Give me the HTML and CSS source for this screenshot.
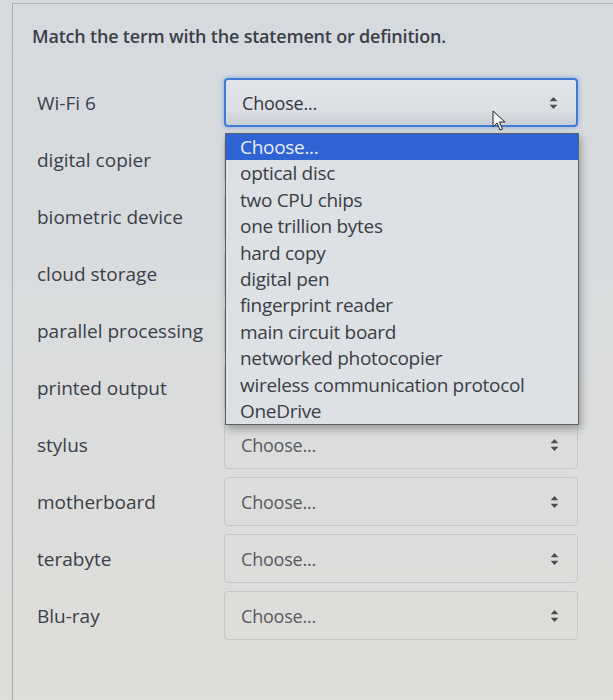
FILE: index.html
```html
<!DOCTYPE html>
<html lang="en">
<head>
    <meta charset="UTF-8">
    <meta name="viewport" content="width=device-width, initial-scale=1.0">
    <title>Match the term</title>
    <link rel="stylesheet" href="styles.css">
</head>
<body>
    <div class="question">
        <h1>Match the term with the statement or definition.</h1>

        <div class="match-list">
            <div class="match-row">
                <span class="term">Wi-Fi 6</span>
                <div class="choice focused">
                    <span>Choose...</span>
                    <svg class="arrows" viewBox="0 0 10 14"><path d="M5 0 L9.5 5 H0.5 Z M5 14 L9.5 9 H0.5 Z"/></svg>
                    <svg class="cursor" viewBox="0 0 14 22"><path d="M1 1 L1 17 L5 13 L8 20 L10.5 19 L7.5 12 L13 12 Z"/></svg>
                </div>
                <ul class="options">
                    <li class="active">Choose...</li>
                    <li>optical disc</li>
                    <li>two CPU chips</li>
                    <li>one trillion bytes</li>
                    <li>hard copy</li>
                    <li>digital pen</li>
                    <li>fingerprint reader</li>
                    <li>main circuit board</li>
                    <li>networked photocopier</li>
                    <li>wireless communication protocol</li>
                    <li>OneDrive</li>
                </ul>
            </div>
            <div class="match-row">
                <span class="term">digital copier</span>
                <div class="choice"><span>Choose...</span><svg class="arrows" viewBox="0 0 10 14"><path d="M5 0 L9.5 5 H0.5 Z M5 14 L9.5 9 H0.5 Z"/></svg></div>
            </div>
            <div class="match-row">
                <span class="term">biometric device</span>
                <div class="choice"><span>Choose...</span><svg class="arrows" viewBox="0 0 10 14"><path d="M5 0 L9.5 5 H0.5 Z M5 14 L9.5 9 H0.5 Z"/></svg></div>
            </div>
            <div class="match-row">
                <span class="term">cloud storage</span>
                <div class="choice"><span>Choose...</span><svg class="arrows" viewBox="0 0 10 14"><path d="M5 0 L9.5 5 H0.5 Z M5 14 L9.5 9 H0.5 Z"/></svg></div>
            </div>
            <div class="match-row">
                <span class="term">parallel processing</span>
                <div class="choice"><span>Choose...</span><svg class="arrows" viewBox="0 0 10 14"><path d="M5 0 L9.5 5 H0.5 Z M5 14 L9.5 9 H0.5 Z"/></svg></div>
            </div>
            <div class="match-row">
                <span class="term">printed output</span>
                <div class="choice"><span>Choose...</span><svg class="arrows" viewBox="0 0 10 14"><path d="M5 0 L9.5 5 H0.5 Z M5 14 L9.5 9 H0.5 Z"/></svg></div>
            </div>
            <div class="match-row">
                <span class="term">stylus</span>
                <div class="choice"><span>Choose...</span><svg class="arrows" viewBox="0 0 10 14"><path d="M5 0 L9.5 5 H0.5 Z M5 14 L9.5 9 H0.5 Z"/></svg></div>
            </div>
            <div class="match-row">
                <span class="term">motherboard</span>
                <div class="choice"><span>Choose...</span><svg class="arrows" viewBox="0 0 10 14"><path d="M5 0 L9.5 5 H0.5 Z M5 14 L9.5 9 H0.5 Z"/></svg></div>
            </div>
            <div class="match-row">
                <span class="term">terabyte</span>
                <div class="choice"><span>Choose...</span><svg class="arrows" viewBox="0 0 10 14"><path d="M5 0 L9.5 5 H0.5 Z M5 14 L9.5 9 H0.5 Z"/></svg></div>
            </div>
            <div class="match-row">
                <span class="term">Blu-ray</span>
                <div class="choice"><span>Choose...</span><svg class="arrows" viewBox="0 0 10 14"><path d="M5 0 L9.5 5 H0.5 Z M5 14 L9.5 9 H0.5 Z"/></svg></div>
            </div>
        </div>
    </div>
</body>
</html>
```

FILE: styles.css
```css
body {
    margin: 0;
    height: 700px;
    overflow: hidden;
    font-family: "Open Sans", "Liberation Sans", sans-serif;
    color: #3a3f47;
    background: linear-gradient(180deg, #d5dadf 0%, #dadcdd 50%, #dfddd9 100%);
}
.question {
    margin: 3px 0 0 12px;
    padding: 21px 0 0 19px;
    border-left: 1px solid #a4abb3;
    border-top: 1px solid #b0b6bc;
    height: 700px;
    box-sizing: border-box;
}
.question h1 {
    margin: 0;
    font-size: 18px;
    font-weight: 600;
    line-height: 22px;
    letter-spacing: -0.2px;
    color: #3b4049;
}
.match-list {
    margin-top: 31px;
    display: flex;
    flex-direction: column;
    gap: 8px;
}
.match-row {
    position: relative;
    display: grid;
    grid-template-columns: 192px 354px;
    align-items: center;
}
.term {
    font-size: 19px;
    padding-left: 5px;
    color: #3b4049;
}
.choice {
    position: relative;
    height: 49px;
    box-sizing: border-box;
    border: 1px solid #c3c6cb;
    border-radius: 4px;
    display: flex;
    align-items: center;
    justify-content: space-between;
    padding: 0 18px 0 16px;
    font-size: 18px;
    letter-spacing: -0.2px;
    color: #565a61;
}
.choice.focused {
    border: 2px solid #3f7ad6;
    box-shadow: 0 0 5px rgba(60, 120, 220, 0.55);
    background: linear-gradient(180deg, #e2e5e9 0%, #dadee3 70%, #c9ced5 100%);
    color: #33373e;
}
.arrows {
    width: 9px;
    height: 12px;
    fill: #4a4d52;
}
.cursor {
    position: absolute;
    left: 266px;
    top: 30px;
    width: 14px;
    height: 22px;
    fill: #f4f5f7;
    stroke: #222;
    stroke-width: 1;
}
.options {
    position: absolute;
    top: 55px;
    left: 193px;
    width: 352px;
    margin: 0;
    padding: 0;
    list-style: none;
    background: #dde0e4;
    border: 1px solid #5a5f68;
    box-shadow: 2px 4px 8px rgba(0, 0, 0, 0.3);
    z-index: 2;
}
.options li {
    height: 26.4px;
    line-height: 26.4px;
    padding-left: 14px;
    font-size: 19px;
    letter-spacing: -0.3px;
    color: #3a3e45;
}
.options li.active {
    background: #2f63d4;
    color: #e8eefc;
}
```
